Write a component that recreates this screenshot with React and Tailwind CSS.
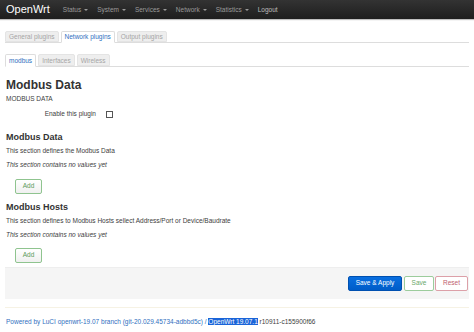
import React from 'react'

const menu = ['Status', 'System', 'Services', 'Network', 'Statistics']

function Caret() {
  return <span className="ml-[3px] inline-block border-x-[2px] border-t-[2px] border-x-transparent border-t-[#9a9a9a] align-middle" />
}

function Tab({ label, active }) {
  return (
    <li
      className={
        active
          ? 'mb-[-1px] rounded-t-[2px] border border-[#ddd] border-b-white bg-white px-[3px] text-[#2f6fc0]'
          : 'rounded-t-[2px] border border-[#e4e4e4] bg-[#eee] px-[3px] text-[#a5a5a5]'
      }
    >
      {label}
    </li>
  )
}

function AddButton({ className }) {
  return (
    <div className={'flex ' + className}>
      <button className="ml-[10px] h-[15px] w-[27px] rounded-[2px] border border-[#8fc48f] bg-gradient-to-b from-white to-[#f0f0f0] text-[6.5px] leading-none text-[#5a9a5a]">
        Add
      </button>
    </div>
  )
}

export default function App() {
  return (
    <div className="h-[332px] w-[474px] overflow-hidden bg-white text-[#404040]" style={{ fontFamily: '"Liberation Sans", Arial, sans-serif' }}>
      {/* Top bar */}
      <div className="flex h-[19px] items-center bg-gradient-to-b from-[#333] to-[#1e1e1e] shadow-[0_1px_1px_rgba(0,0,0,0.25)]">
        <span className="ml-[6px] mr-[13px] text-[11px] leading-none text-white">OpenWrt</span>
        <div className="flex gap-[9px] text-[6.5px] text-[#9a9a9a]">
          {menu.map((m) => (
            <span key={m} className="flex items-center">
              {m}
              <Caret />
            </span>
          ))}
          <span className="text-[#bdbdbd]">Logout</span>
        </div>
      </div>

      <div className="px-[5px]">
        {/* Plugin tabs */}
        <ul className="mt-[12px] flex h-[12px] gap-[2px] border-b border-[#ddd] text-[6.5px] leading-[10px]">
          <Tab label="General plugins" />
          <Tab label="Network plugins" active />
          <Tab label="Output plugins" />
        </ul>

        <ul className="mt-[11px] flex h-[13px] gap-[2px] border-b border-[#ddd] text-[6.5px] leading-[11px]">
          <Tab label="modbus" active />
          <Tab label="Interfaces" />
          <Tab label="Wireless" />
        </ul>

        {/* Map */}
        <h2 className="ml-[1px] mt-[11px] text-[12px] font-bold leading-[14px] text-[#333]">Modbus Data</h2>
        <div className="ml-[1px] mt-[3px] text-[6.5px] leading-[8px]">MODBUS DATA</div>

        <div className="mt-[7px] flex items-center text-[6.5px] leading-[8px]">
          <span className="w-[91px] text-right">Enable this plugin</span>
          <span className="ml-[10px] inline-block h-[7px] w-[7px] border border-[#555] bg-white" />
        </div>

        <h3 className="ml-[1px] mt-[14px] text-[9px] font-bold leading-[11px] text-[#333]">Modbus Data</h3>
        <p className="ml-[1px] mt-[4px] text-[6.5px] leading-[8px]">This section defines the Modbus Data</p>
        <p className="ml-[1px] mt-[6px] text-[6.5px] italic leading-[8px]">This section contains no values yet</p>
        <AddButton className="mt-[10px]" />

        <h3 className="ml-[1px] mt-[8px] text-[9px] font-bold leading-[11px] text-[#333]">Modbus Hosts</h3>
        <p className="ml-[1px] mt-[4px] text-[6.5px] leading-[8px]">This section defines to Modbus Hosts sellect Address/Port or Device/Baudrate</p>
        <p className="ml-[1px] mt-[6px] text-[6.5px] italic leading-[8px]">This section contains no values yet</p>
        <AddButton className="mt-[9px]" />

        {/* Actions */}
        <div className="mt-[4px] flex h-[32px] items-center justify-end border-t border-[#eee] bg-[#f5f5f5] pr-[1px]">
          <button className="h-[15px] w-[54px] rounded-[2px] border border-[#0050b0] bg-gradient-to-b from-[#0a6fe0] to-[#005cc8] text-[6.5px] leading-none text-white">
            Save &amp; Apply
          </button>
          <button className="ml-[2px] h-[15px] w-[30px] rounded-[2px] border border-[#9ccc9c] bg-white text-[6.5px] leading-none text-[#6aa86a]">
            Save
          </button>
          <button className="ml-[1px] h-[15px] w-[33px] rounded-[2px] border border-[#dca0a8] bg-white text-[6.5px] leading-none text-[#c0606e]">
            Reset
          </button>
        </div>

        {/* Footer */}
        <div className="mt-[8px] border-t border-[#f6f2e4] pt-[10px] text-[6.5px] leading-[8px]">
          <span className="ml-[1px] text-[#2f6fc0]">Powered by LuCI openwrt-19.07 branch (git-20.029.45734-adbbd5c) / </span>
          <span className="bg-[#1a64d8] text-white">OpenWrt 19.07.1</span>
          <span className="text-[#404040]"> r10911-c155900f66</span>
        </div>
      </div>
    </div>
  )
}
